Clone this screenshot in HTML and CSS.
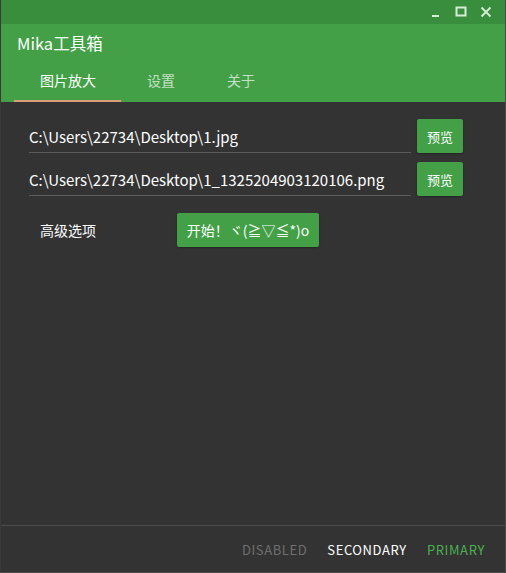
FILE: index.html
```html
<!DOCTYPE html>
<html lang="zh">
<head>
<meta charset="utf-8">
<title>Mika工具箱</title>
<link rel="stylesheet" href="styles.css">
</head>
<body>
<div class="window">
  <div class="titlebar">
    <button class="winbtn" aria-label="minimize">
      <svg width="12" height="12" viewBox="0 0 12 12"><rect x="2" y="9" width="7" height="2" fill="#d7ecd8"/></svg>
    </button>
    <button class="winbtn" aria-label="maximize">
      <svg width="12" height="12" viewBox="0 0 12 12"><rect x="1.5" y="1.5" width="9" height="8" fill="none" stroke="#d7ecd8" stroke-width="2"/></svg>
    </button>
    <button class="winbtn" aria-label="close">
      <svg width="12" height="12" viewBox="0 0 12 12"><path d="M1.5 1.5 L10.5 10.5 M10.5 1.5 L1.5 10.5" stroke="#d7ecd8" stroke-width="1.8"/></svg>
    </button>
  </div>
  <header class="appbar">
    <div class="apptitle">Mika工具箱</div>
    <nav class="tabs">
      <div class="tab active">图片放大</div>
      <div class="tab">设置</div>
      <div class="tab">关于</div>
    </nav>
  </header>
  <main class="content">
    <div class="row">
      <div class="field">C:\Users\22734\Desktop\1.jpg</div>
      <button class="btn small">预览</button>
    </div>
    <div class="row">
      <div class="field">C:\Users\22734\Desktop\1_1325204903120106.png</div>
      <button class="btn small">预览</button>
    </div>
    <div class="options">
      <span class="label">高级选项</span>
      <button class="btn start">开始！ヾ(≧▽≦*)o</button>
    </div>
  </main>
  <footer class="actions">
    <span class="action disabled">DISABLED</span>
    <span class="action secondary">SECONDARY</span>
    <span class="action primary">PRIMARY</span>
  </footer>
</div>
</body>
</html>
```

FILE: styles.css
```css
* { box-sizing: border-box; }
html, body {
  margin: 0;
  padding: 0;
  width: 506px;
  height: 573px;
  overflow: hidden;
  background: #333333;
  font-family: "Noto Sans CJK SC", "Noto Sans", sans-serif;
}
.window {
  width: 506px;
  height: 573px;
  display: flex;
  flex-direction: column;
  background: #333333;
  border-right: 1px solid #4a4a4a;
  border-bottom: 1px solid #4a4a4a;
  border-left: 1px solid #3a3a3a;
}
.titlebar {
  height: 24px;
  background: #388e3c;
  display: flex;
  justify-content: flex-end;
  align-items: center;
  padding-right: 13px;
  gap: 13px;
}
.winbtn {
  background: none;
  border: 0;
  padding: 0;
  width: 12px;
  height: 12px;
  display: flex;
}
.appbar {
  height: 78px;
  background: #43a047;
  display: flex;
  flex-direction: column;
}
.apptitle {
  color: #ffffff;
  font-size: 16.5px;
  line-height: 22px;
  padding: 8px 0 0 16px;
  height: 41px;
}
.tabs {
  display: flex;
  padding-left: 13px;
  height: 37px;
}
.tab {
  padding: 5px 26px 0 26px;
  font-size: 14px;
  line-height: 20px;
  color: rgba(255,255,255,0.7);
  border-bottom: 2px solid transparent;
}
.tab.active {
  color: #ffffff;
  padding-right: 25px;
  border-bottom-color: #d9a07a;
}
.content {
  flex: 1;
  display: flex;
  flex-direction: column;
  padding: 17px 42px 0 28px;
  gap: 9px;
}
.row {
  display: flex;
  align-items: center;
  gap: 6px;
  height: 34px;
}
.field {
  flex: 1;
  color: #ffffff;
  font-size: 15px;
  line-height: 20px;
  padding-top: 8px;
  padding-bottom: 5px;
  border-bottom: 1px solid #5a5a5a;
}
.btn {
  background: #43a047;
  color: #ffffff;
  border: 0;
  border-radius: 2px;
  font-family: inherit;
  font-size: 14px;
  height: 34px;
  box-shadow: 0 1px 2px rgba(0,0,0,0.3);
}
.btn.small {
  width: 46px;
  padding: 0;
  font-size: 13px;
}
.options {
  display: flex;
  align-items: center;
  padding-left: 11px;
  margin-top: 8px;
}
.label {
  color: #ffffff;
  font-size: 14px;
  width: 137px;
}
.btn.start {
  padding: 0 6px;
  width: 142px;
  white-space: nowrap;
}
.actions {
  height: 47px;
  border-top: 1px solid #4c4c4c;
  display: flex;
  justify-content: flex-end;
  align-items: center;
  gap: 20px;
  padding-right: 20px;
}
.action {
  font-size: 13px;
  letter-spacing: 0.6px;
}
.disabled { color: #6f6f6f; }
.secondary { color: #ffffff; }
.primary { color: #4caf50; }
```
